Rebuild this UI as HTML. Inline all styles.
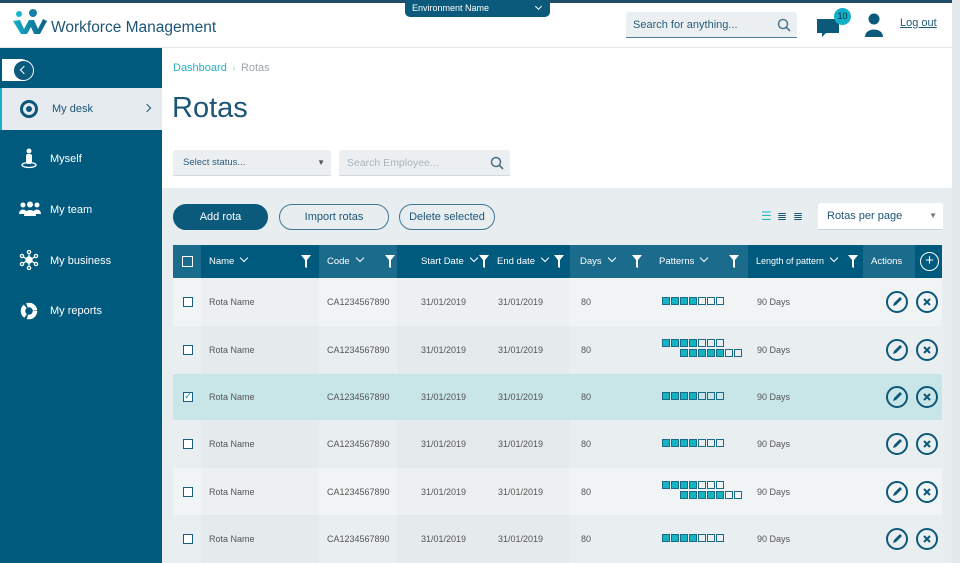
<!DOCTYPE html>
<html><head><meta charset="utf-8"><style>
*{box-sizing:border-box;margin:0;padding:0}
body{width:960px;height:563px;overflow:hidden;font-family:"Liberation Sans",sans-serif;background:#e8edf0;position:relative;color:#555}
.a{position:absolute}
.hdr{left:0;top:0;width:960px;height:48px;background:#fff;border-top:3px solid #1f4e66;border-bottom:1px solid #e3e8eb}
.side{left:0;top:48px;width:162px;height:515px;background:#005a7e}
.nav{left:0;width:162px;height:42px;color:#fff;font-size:11px;line-height:42px;padding-left:50px}
.main{left:162px;top:48px;width:790px;height:140px;background:#fff}
.th{top:245px;height:33px;color:#fff;font-size:9.5px;line-height:33px}
.row{left:173px;width:769px;font-size:9px;color:#555}
.cell{position:absolute;top:0;height:100%;display:flex;align-items:center}
.cb{width:10px;height:10px;border:1.3px solid #1a5f80;background:#fff}
.btn{border-radius:13px;height:26px;line-height:24px;text-align:center;font-size:11px}
.ic{width:22px;height:22px;border:2px solid #0d5879;border-radius:50%;display:flex;align-items:center;justify-content:center}
.pat{display:flex;gap:1px}
.pat i{display:block;width:8px;height:8px;border:1px solid #1b6a88}
.pat i.f{background:#16b3c3}
.chev{display:inline-block;width:6px;height:6px;border-right:1.5px solid #fff;border-bottom:1.5px solid #fff;transform:rotate(45deg);margin:0 0 3px 7px}
</style></head><body>
<div class="a hdr"></div>
<svg class="a" style="left:12px;top:8px" width="36" height="26" viewBox="0 0 36 26">
<defs><linearGradient id="g" x1="0" x2="1"><stop offset="0" stop-color="#17b0c8"/><stop offset="1" stop-color="#0c5f86"/></linearGradient></defs>
<circle cx="7" cy="6" r="3" fill="#18b6cb"/><circle cx="21" cy="5" r="4" fill="#1a7fa8"/>
<path d="M1 13 L8 12 L12 21 L17 12 L22 12 L26 21 L31 11 L35 13 L28 26 L22 26 L19 19 L15 26 L9 26 Z" fill="url(#g)"/>
</svg>
<div class="a" style="left:51px;top:19px;font-size:15.5px;color:#1d5576">Workforce Management</div>
<div class="a" style="left:405px;top:0;width:145px;height:17px;background:#0b5a7c;border-radius:0 0 5px 5px;color:#fff;font-size:9px;line-height:17px;padding-left:7px">Environment Name<span class="a" style="right:9px;top:4px;width:5px;height:5px;border-right:1.3px solid #fff;border-bottom:1.3px solid #fff;transform:rotate(45deg)"></span></div>
<div class="a" style="left:626px;top:12px;width:171px;height:26px;background:#ebeff2;border-bottom:1.5px solid #4d7f9a;border-radius:3px 3px 0 0;font-size:11px;color:#2a5d7a;line-height:26px;padding-left:7px">Search for anything...</div>
<svg class="a" style="left:777px;top:18px" width="14" height="14"><circle cx="6" cy="6" r="4.5" fill="none" stroke="#4e7891" stroke-width="1.5"/><path d="M9.5 9.5 L13 13" stroke="#4e7891" stroke-width="1.6"/></svg>
<svg class="a" style="left:816px;top:17px" width="24" height="22"><path d="M1 2 h22 v14 h-13 l-4 4 v-4 h-5z" fill="#0b5a7c"/></svg>
<div class="a" style="left:834px;top:8px;width:17px;height:17px;border-radius:50%;background:#13b0c9;color:#123;font-size:9px;line-height:17px;text-align:center">10</div>
<svg class="a" style="left:864px;top:13px" width="20" height="24"><circle cx="10" cy="6" r="5.5" fill="#0b5a7c"/><path d="M1 24 C1 14 19 14 19 24z" fill="#0b5a7c"/></svg>
<div class="a" style="left:900px;top:17px;font-size:11px;color:#1f5a78;text-decoration:underline">Log out</div>

<div class="a side"></div>
<div class="a" style="left:2px;top:59px;width:30px;height:22px;background:#fff;border-radius:0 11px 11px 0"></div>
<div class="a" style="left:13px;top:60px;width:21px;height:21px;border-radius:50%;background:#0b5a7c;border:1.5px solid #fff"></div>
<span class="a" style="left:21px;top:67px;width:6px;height:6px;border-left:1.6px solid #fff;border-bottom:1.6px solid #fff;transform:rotate(45deg)"></span>
<div class="a nav" style="top:88px;background:#e5ebee;color:#1d5576;border-left:2px solid #17b0c8">My desk</div>
<div class="a" style="left:20px;top:100px;width:18px;height:18px;border-radius:50%;border:3px solid #0d5879"></div>
<div class="a" style="left:26px;top:106px;width:6px;height:6px;border-radius:50%;background:#0d5879"></div>
<span class="a" style="left:144px;top:105px;width:6px;height:6px;border-right:1.5px solid #1d5576;border-top:1.5px solid #1d5576;transform:rotate(45deg)"></span>
<div class="a nav" style="top:138px">Myself</div>
<svg class="a" style="left:20px;top:148px" width="18" height="22"><circle cx="9" cy="3" r="2.5" fill="#fff"/><rect x="6" y="6" width="6" height="10" rx="2" fill="#fff"/><ellipse cx="9" cy="17" rx="7" ry="2.5" fill="none" stroke="#fff" stroke-width="1.3"/></svg>
<div class="a nav" style="top:189px">My team</div>
<svg class="a" style="left:19px;top:201px" width="22" height="16"><circle cx="4" cy="4" r="2.5" fill="#fff"/><circle cx="11" cy="3.5" r="3" fill="#fff"/><circle cx="18" cy="4" r="2.5" fill="#fff"/><path d="M0 13 C0 7 8 7 8 13z M5 15 C5 7 17 7 17 15z M14 13 C14 7 22 7 22 13z" fill="#fff"/></svg>
<div class="a nav" style="top:240px">My business</div>
<svg class="a" style="left:19px;top:250px" width="20" height="20" fill="none" stroke="#fff" stroke-width="1.3"><circle cx="10" cy="10" r="3" fill="#fff"/><circle cx="10" cy="2" r="1.6"/><circle cx="10" cy="18" r="1.6"/><circle cx="3" cy="6" r="1.6"/><circle cx="17" cy="6" r="1.6"/><circle cx="3" cy="14" r="1.6"/><circle cx="17" cy="14" r="1.6"/><path d="M10 4v3M10 13v3M4.5 7l3 2M15.5 7l-3 2M4.5 13l3-2M15.5 13l-3-2"/></svg>
<div class="a nav" style="top:290px">My reports</div>
<svg class="a" style="left:20px;top:302px" width="18" height="18"><circle cx="9" cy="9" r="6" fill="none" stroke="#fff" stroke-width="4.5" stroke-dasharray="11 2"/></svg>

<div class="a main"></div>
<div class="a" style="left:173px;top:62px;font-size:11px;color:#26b0c6">Dashboard <span style="color:#b9c4ca;font-size:9px">&nbsp;›&nbsp;</span> <span style="color:#9aa6ad">Rotas</span></div>
<div class="a" style="left:172px;top:92px;font-size:29px;color:#1d5576;font-weight:300">Rotas</div>
<div class="a" style="left:173px;top:150px;width:158px;height:26px;background:#ebeff2;border-bottom:1.5px solid #d4dbe0;border-radius:3px 3px 0 0;font-size:9.5px;color:#2a5d7a;line-height:26px;padding-left:10px">Select status...<span class="a" style="right:6px;top:0;font-size:8px;color:#555">▼</span></div>
<div class="a" style="left:339px;top:150px;width:171px;height:26px;background:#ebeff2;border-bottom:1.5px solid #d4dbe0;border-radius:3px 3px 0 0;font-size:10.5px;color:#a8b4bb;line-height:26px;padding-left:8px">Search Employee...</div>
<svg class="a" style="left:490px;top:156px" width="14" height="14"><circle cx="6" cy="6" r="4.5" fill="none" stroke="#4e6e82" stroke-width="1.5"/><path d="M9.5 9.5 L13 13" stroke="#4e6e82" stroke-width="1.6"/></svg>

<div class="a btn" style="left:173px;top:204px;width:95px;background:#0b5a7c;color:#fff;border:1px solid #0b5a7c">Add rota</div>
<div class="a btn" style="left:279px;top:204px;width:110px;border:1px solid #3e7896;color:#1d5576">Import rotas</div>
<div class="a btn" style="left:399px;top:204px;width:96px;border:1px solid #3e7896;color:#1d5576">Delete selected</div>
<div class="a" style="left:761px;top:210px;color:#2ab8ca;font-size:12px;line-height:12px">☰</div>
<div class="a" style="left:777px;top:210px;color:#1d5576;font-size:12px;line-height:12px">≣</div>
<div class="a" style="left:793px;top:210px;color:#1d5576;font-size:12px;line-height:12px">≣</div>
<div class="a" style="left:818px;top:203px;width:125px;height:27px;background:#fff;border-bottom:1.5px solid #cbd3d8;border-radius:3px 3px 0 0;font-size:11px;color:#1d5576;line-height:26px;padding-left:9px">Rotas per page<span class="a" style="right:6px;top:0;font-size:8px;color:#777">▼</span></div>

<div class="a th" style="left:173px;width:769px;background:#005a7e"></div>
<div class="a th" style="left:173px;width:28px;background:#1b6b8d"></div>
<div class="a th" style="left:319px;width:78px;background:#1b6b8d"></div>
<div class="a th" style="left:570px;width:178px;background:#1b6b8d"></div>
<div class="a th" style="left:863px;width:52px;background:#1b6b8d"></div>
<div class="a" style="left:182px;top:256px;width:11px;height:11px;border:1.5px solid #fff"></div>
<div class="a th" style="left:209px">Name<span class="chev"></span></div>
<div class="a th" style="left:327px">Code<span class="chev"></span></div>
<div class="a th" style="left:421px">Start Date<span class="chev"></span></div>
<div class="a th" style="left:497px">End date<span class="chev"></span></div>
<div class="a th" style="left:580px">Days<span class="chev"></span></div>
<div class="a th" style="left:659px">Patterns<span class="chev"></span></div>
<div class="a th" style="left:756px;font-size:9px">Length of pattern<span class="chev"></span></div>
<div class="a th" style="left:871px">Actions</div>
<div class="a" style="left:920px;top:252px;width:19px;height:19px;border:1.5px solid #fff;border-radius:50%;color:#fff;text-align:center;font-size:15px;line-height:15px">+</div>
<svg class="a" style="left:0;top:254px" width="960" height="16" fill="#fff">
<g id="f"><path d="M301 1h10l-4 5v8l-2 -1v-7z"/></g>
<use href="#f" x="84"/><use href="#f" x="178"/><use href="#f" x="253"/><use href="#f" x="331"/><use href="#f" x="428"/><use href="#f" x="547"/>
</svg>

<div id="rows"></div>
<script>
var tops=[278,326,374,420,468,515],bg=['#f0f4f5','#e9eef0','#c8e5e8','#e9eef0','#f0f4f5','#e9eef0'],two=[0,1,0,0,1,0];
function p(n,f){var s='<div class="pat">';for(var i=0;i<n;i++)s+='<i'+(i<f?' class="f"':'')+'></i>';return s+'</div>';}
var h='';
tops.forEach(function(t,i){
var H=(tops[i+1]||563)-t;
h+='<div class="a row" style="top:'+t+'px;height:'+H+'px;background:'+bg[i]+'">';
if(i!=2){h+='<div class="cell" style="left:28px;width:118px;background:rgba(0,0,0,0.015)"></div><div class="cell" style="left:224px;width:173px;background:rgba(0,0,0,0.015)"></div>';}
h+='<div class="cell" style="left:10px">'+(i==2?'<div class="cb" style="color:#18a9c0;font-size:10px;line-height:8px;text-align:center">✓</div>':'<div class="cb"></div>')+'</div>';
h+='<div class="cell" style="left:36px">Rota Name</div><div class="cell" style="left:154px">CA1234567890</div><div class="cell" style="left:248px">31/01/2019</div><div class="cell" style="left:325px">31/01/2019</div><div class="cell" style="left:408px">80</div>';
h+='<div class="cell" style="left:584px">90 Days</div>';
if(two[i])h+='<div class="a" style="left:489px;top:'+(H/2-11)+'px">'+p(7,4)+'<div style="margin:2px 0 0 18px">'+p(7,5)+'</div></div>';
else h+='<div class="a" style="left:489px;top:'+(H/2-5)+'px">'+p(7,4)+'</div>';
h+='<div class="cell" style="left:713px"><div class="ic"><svg width="12" height="12"><path d="M2 10 L3 7 L9 1 L11 3 L5 9 Z" fill="#0d5879"/></svg></div></div>';
h+='<div class="cell" style="left:743px"><div class="ic"><svg width="10" height="10"><path d="M2 2 L8 8 M8 2 L2 8" stroke="#0d5879" stroke-width="2"/></svg></div></div>';
h+='</div>';});
document.getElementById('rows').innerHTML=h;
</script>
<div class="a" style="left:952px;top:0;width:8px;height:563px;background:#e3e8eb"></div>
</body></html>
